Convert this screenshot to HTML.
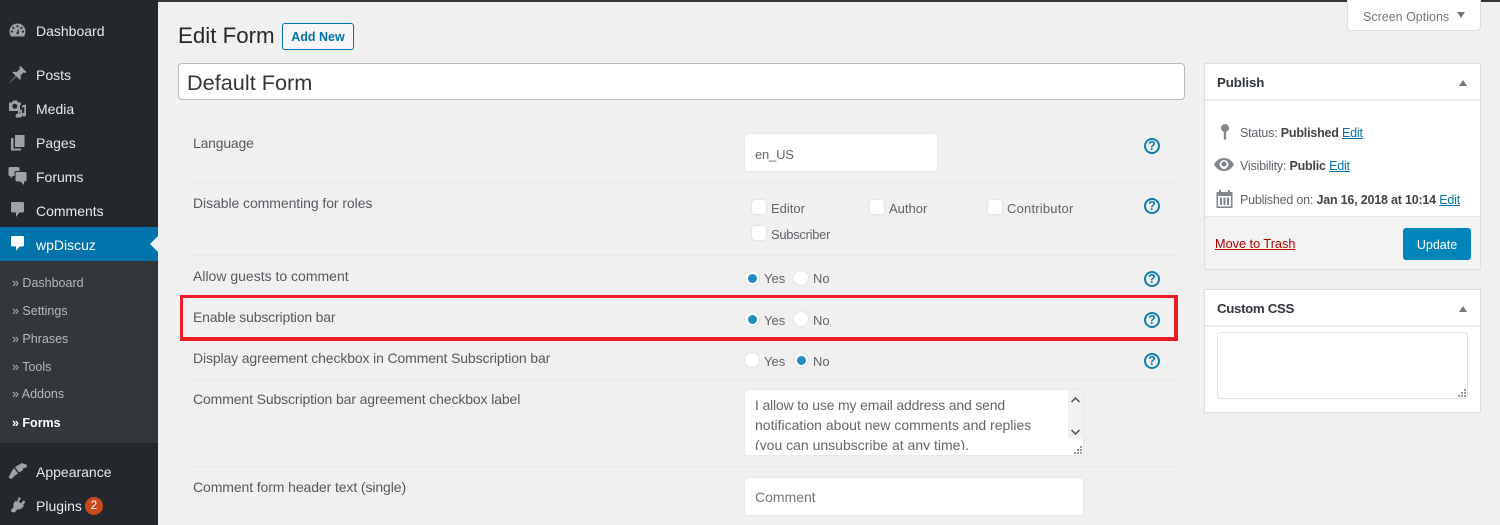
<!DOCTYPE html>
<html><head><meta charset="utf-8"><style>
html,body{margin:0;padding:0}
body{width:1500px;height:525px;overflow:hidden;background:#f0f0f0;position:relative;font-family:"Liberation Sans",sans-serif;font-size:13px;color:#555}
.a,.t{position:absolute}
.t{white-space:nowrap;line-height:18px}
.m{font-size:14px;left:36px;color:#e6eaec}
.s{color:#b4b9be;font-size:12.5px;left:12px}
.l{left:193px;color:#555a60;font-size:14px;letter-spacing:-.1px}
.v{color:#5f656b;font-size:13px}
.p{color:#5f656b;font-size:12.5px;letter-spacing:-.2px}
.sep{position:absolute;left:188px;width:988px;border-top:1px dotted #e2e2e2}
.inp{position:absolute;background:#fff;border-radius:3px;box-shadow:0 0 2px rgba(0,0,0,.1)}
.cb{position:absolute;width:14px;height:14px;background:#fff;border-radius:3px;box-shadow:0 0 2px rgba(0,0,0,.14)}
.r{position:absolute;width:14px;height:14px;background:#fff;border-radius:50%;box-shadow:0 0 2px rgba(0,0,0,.14)}
.r.on:after{content:"";position:absolute;left:2.500px;top:2.500px;width:9px;height:9px;border-radius:50%;background:#1e8cbe}
.q{position:absolute;left:1144px;width:12px;height:12px;border:2px solid #0f7fb0;border-radius:50%;color:#0f7fb0;font:bold 12.5px/12px "Liberation Sans",sans-serif;text-align:center}
.box{position:absolute;left:1204px;width:275px;background:#fff;border:1px solid #dcdfe2}
a{color:#0073aa;text-decoration:underline}
b{color:#444}
svg{position:absolute}
</style></head><body>
<div class="a" style="left:0;top:0;width:1500px;height:2px;background:#32373c"></div>
<div class="a" style="left:0;top:0;width:158px;height:525px;background:#23282d"></div>
<div class="a" style="left:0;top:227px;width:158px;height:34px;background:#0073aa"></div>
<div class="a" style="left:0;top:261px;width:158px;height:182px;background:#32373c"></div>
<div class="a" style="left:150px;top:236px;width:0;height:0;border:8px solid transparent;border-right-color:#f0f0f0;border-left:0"></div>

<svg style="left:9px;top:23px" width="17" height="14" viewBox="0 0 17 14"><path fill="#9ea3a8" fill-rule="evenodd" d="M8.500 .5C3.800 .5 .5 4.200 .5 8.500 .5 10.300 1 12 2 13.500H15C16 12 16.500 10.300 16.500 8.500 16.500 4.200 13.200 .5 8.500 .5ZM8.500 2.200A1.100 1.100 0 1 1 8.400 4.400 1.100 1.100 0 1 1 8.500 2.200ZM4.500 3.800A1.100 1.100 0 1 1 4.400 6 1.100 1.100 0 1 1 4.500 3.800ZM12.500 3.800A1.100 1.100 0 1 1 12.400 6 1.100 1.100 0 1 1 12.500 3.800ZM3 7.500A1.100 1.100 0 1 1 2.900 9.700 1.100 1.100 0 1 1 3 7.500ZM14 7.500A1.100 1.100 0 1 1 13.900 9.700 1.100 1.100 0 1 1 14 7.500ZM9.800 5.500 9.800 10.500A1.500 1.500 0 0 1 7.200 10.500Z"/></svg>
<div class="t m" style="top:22px">Dashboard</div>

<svg style="left:9px;top:66px" width="18" height="18" viewBox="0 0 18 18"><path fill="#9ea3a8" d="M11.500 0 17.500 6 16 7.200 14.800 6.300 11.500 9.800C12 11.200 11.800 12.700 11 14L7.300 10.300 .5 17.300 .2 17 6.800 9.800 3.300 6.500C4.600 5.700 6 5.600 7.600 6.100L11 2.800 10.300 1.500Z"/></svg>
<div class="t m" style="top:66px">Posts</div>

<svg style="left:8px;top:100px" width="19" height="18" viewBox="0 0 19 18"><path fill="#9ea3a8" fill-rule="evenodd" d="M1 2.500H4L5 .5H9L10 2.500H13V5H12V11H1ZM6.800 3.800A2.500 2.500 0 1 0 6.800 8.800 2.500 2.500 0 0 0 6.800 3.800Z"/><path fill="#9ea3a8" d="M14 5.500 18 4.500V14.500A2 2 0 1 1 16.300 12.600V7L14 7.500ZM10 10.500 14 9.500V15.500A2 2 0 1 1 12.400 13.600V11.500L11.500 11.800V15.800A2 2 0 1 1 10 13.900Z"/></svg>
<div class="t m" style="top:100px">Media</div>

<svg style="left:10px;top:134px" width="15" height="18" viewBox="0 0 15 18"><path fill="#9ea3a8" d="M5 1H14.500V13H5Z"/><path fill="#9ea3a8" d="M1 4H3.500V14.500H11V16.500H1Z"/></svg>
<div class="t m" style="top:134px">Pages</div>

<svg style="left:8px;top:167px" width="19" height="19" viewBox="0 0 19 19"><path fill="#9ea3a8" d="M2 0H10A1.500 1.500 0 0 1 11.500 1.500V4H8.500A2 2 0 0 0 6.500 6V9H5L2.500 11.500V9H2A1.500 1.500 0 0 1 .5 7.500V1.500A1.500 1.500 0 0 1 2 0Z"/><path fill="#9ea3a8" d="M9 5H17A1.500 1.500 0 0 1 18.500 6.500V13A1.500 1.500 0 0 1 17 14.500H16V18L12.500 14.500H9A1.500 1.500 0 0 1 7.500 13V6.500A1.500 1.500 0 0 1 9 5Z"/></svg>
<div class="t m" style="top:168px">Forums</div>

<svg style="left:10px;top:201px" width="15" height="17" viewBox="0 0 15 17"><path fill="#9ea3a8" d="M2.500 1H12.500A1.500 1.500 0 0 1 14 2.500V10A1.500 1.500 0 0 1 12.500 11.500H9.500L6 16V11.500H2.500A1.500 1.500 0 0 1 1 10V2.500A1.500 1.500 0 0 1 2.500 1Z"/></svg>
<div class="t m" style="top:202px">Comments</div>

<svg style="left:10px;top:235px" width="15" height="17" viewBox="0 0 15 17"><path fill="#fff" d="M2.500 1H12.500A1.500 1.500 0 0 1 14 2.500V10A1.500 1.500 0 0 1 12.500 11.500H9.500L6 16V11.500H2.500A1.500 1.500 0 0 1 1 10V2.500A1.500 1.500 0 0 1 2.500 1Z"/></svg>
<div class="t m" style="top:236px;color:#fff">wpDiscuz</div>

<div class="t s" style="top:274px">» Dashboard</div>
<div class="t s" style="top:302px">» Settings</div>
<div class="t s" style="top:330px">» Phrases</div>
<div class="t s" style="top:358px">» Tools</div>
<div class="t s" style="top:385px">» Addons</div>
<div class="t s" style="top:414px;color:#fff;font-weight:bold">» Forms</div>

<svg style="left:8px;top:462px" width="20" height="18" viewBox="0 0 20 18"><path fill="#9ea3a8" d="M7 5 14 1 19 3 18.500 5.500 15.500 6 14.500 8.500 11 10.500Z"/><path fill="#9ea3a8" d="M6 6 10 11.500 7 13.500 3.500 17 .5 15.500 3 10.500Z"/></svg>
<div class="t m" style="top:463px">Appearance</div>

<svg style="left:10px;top:496px" width="16" height="17" viewBox="0 0 16 17"><path fill="#9ea3a8" d="M9 1 11 2.500 8.700 5.500 11 7.300 13.500 4.300 15.500 6 13 9 14 10 13 10.800C11.500 13 9.500 13.800 7.500 13.300L4.500 16.500 1.500 16 1 14 3.800 11C3 9 3.300 7 4.800 5.700L5.700 4.700 6.700 5.700Z"/></svg>
<div class="t m" style="top:497px">Plugins</div>
<div class="a" style="left:85px;top:497px;width:18px;height:18px;border-radius:50%;background:#ca4a1f;color:#fff;font-size:11.500px;line-height:18px;text-align:center">2</div>

<div class="t" style="left:178px;top:21px;font-size:22.300px;line-height:30px;color:#23282d">Edit Form</div>
<div class="a" style="left:282px;top:23px;width:70px;height:25px;border:1px solid #0073aa;border-radius:3px;background:#f7f7f7;color:#0073aa;font-size:12.500px;font-weight:bold;line-height:27px;text-align:center">Add New</div>

<div class="a" style="left:1347px;top:0;width:132px;height:30px;background:#fff;border:1px solid #ddd;border-top:0;border-radius:0 0 4px 4px"></div>
<div class="t" style="left:1363px;top:8px;color:#72777c;font-size:12.500px">Screen Options</div>
<div class="a" style="left:1457px;top:12px;border:4.500px solid transparent;border-top:6px solid #72777c;border-bottom:0"></div>

<div class="a" style="left:178px;top:63px;width:1005px;height:35px;background:#fff;border:1px solid #b4b9be;border-radius:4px"></div>
<div class="t" style="left:187px;top:69px;font-size:21.700px;line-height:28px;color:#32373c">Default Form</div>

<div class="t l" style="top:134px;letter-spacing:-.2px">Language</div>
<div class="inp" style="left:745px;top:134px;width:192px;height:37px"></div>
<div class="t v" style="left:755px;top:146px;color:#666;font-size:13px;letter-spacing:-.2px">en_US</div>
<div class="q" style="top:138px">?</div>
<div class="sep" style="top:182px"></div>

<div class="t l" style="top:194px;letter-spacing:-.07px">Disable commenting for roles</div>
<div class="cb" style="left:752px;top:200px"></div><div class="t v" style="left:771px;top:200px">Editor</div>
<div class="cb" style="left:870px;top:200px"></div><div class="t v" style="left:889px;top:200px">Author</div>
<div class="cb" style="left:988px;top:200px"></div><div class="t v" style="left:1007px;top:200px;letter-spacing:.2px">Contributor</div>
<div class="cb" style="left:752px;top:226px"></div><div class="t v" style="left:771px;top:226px;letter-spacing:-.3px">Subscriber</div>
<div class="q" style="top:198px">?</div>
<div class="sep" style="top:255px"></div>

<div class="t l" style="top:267px;letter-spacing:0">Allow guests to comment</div>
<div class="r on" style="left:745px;top:271px"></div><div class="t v" style="left:764px;top:270px">Yes</div>
<div class="r" style="left:794px;top:271px"></div><div class="t v" style="left:813px;top:270px">No</div>
<div class="q" style="top:271px">?</div>

<div class="t l" style="top:308px;letter-spacing:-.17px">Enable subscription bar</div>
<div class="r on" style="left:745px;top:312px"></div><div class="t v" style="left:764px;top:312px">Yes</div>
<div class="r" style="left:794px;top:312px"></div><div class="t v" style="left:813px;top:312px">No</div>
<div class="q" style="top:312px">?</div>

<div class="t l" style="top:349px;letter-spacing:-.13px">Display agreement checkbox in Comment Subscription bar</div>
<div class="r" style="left:745px;top:353px"></div><div class="t v" style="left:764px;top:353px">Yes</div>
<div class="r on" style="left:794px;top:353px"></div><div class="t v" style="left:813px;top:353px">No</div>
<div class="q" style="top:353px">?</div>
<div class="sep" style="top:379px"></div>

<div class="t l" style="top:390px;letter-spacing:-.12px">Comment Subscription bar agreement checkbox label</div>
<div class="inp" style="left:745px;top:390px;width:338px;height:65px;overflow:hidden">
<div style="position:absolute;left:10px;top:5px;width:310px;height:55px;overflow:hidden;font-size:14px;line-height:20px;color:#666;white-space:nowrap"><span style="letter-spacing:-.17px">I allow to use my email address and send</span><br>notification about new comments and replies<br>(you can unsubscribe at any time).</div>
<div style="position:absolute;right:0;top:0;width:15px;height:49px;background:#f1f1f1"></div>
<svg style="left:323px;top:4px" width="15" height="44" viewBox="0 0 15 44"><path fill="none" stroke="#505050" stroke-width="1.500" d="M3.500 8 7.500 4 11.500 8M3.500 36 7.500 40 11.500 36"/></svg>
<svg style="left:328px;top:55px" width="10" height="10" viewBox="0 0 10 10"><path fill="#999" d="M7 1h2v2H7zM4 4h2v2H4zM7 4h2v2H7zM1 7h2v2H1zM4 7h2v2H4zM7 7h2v2H7z"/></svg>
</div>
<div class="sep" style="top:466px"></div>

<div class="t l" style="top:478px">Comment form header text (single)</div>
<div class="inp" style="left:745px;top:478px;width:338px;height:37px"></div>
<div class="t v" style="left:755px;top:488px;font-size:14px;color:#72777c">Comment</div>

<div class="a" style="left:180px;top:295px;width:991px;height:39px;border:solid #ed1c24;border-width:3px 4px 4px 3px"></div>

<div class="box" style="top:63px;height:205px">
<div class="a" style="left:0;top:35px;width:275px;height:2px;background:#ececec"></div>
<div class="a" style="left:0;top:152px;width:275px;height:52px;background:#f3f3f3;border-top:1px solid #e4e4e4"></div>
</div>
<div class="t" style="left:1217px;top:74px;font-size:13.300px;font-weight:bold;color:#32373c;letter-spacing:-.1px">Publish</div>
<div class="a" style="left:1459px;top:80px;border:4px solid transparent;border-bottom:6px solid #72777c;border-top:0"></div>
<svg style="left:1221px;top:124px" width="8" height="16" viewBox="0 0 8 16"><path fill="#82878c" d="M4 0A4 4 0 0 1 5.200 7.800V15L3.500 16 2.800 15V7.800A4 4 0 0 1 4 0Z"/></svg>
<div class="t p" style="left:1240px;top:124px">Status: <b>Published</b> <a>Edit</a></div>
<svg style="left:1214px;top:157px" width="20" height="15" viewBox="0 0 20 15"><path fill="#82878c" fill-rule="evenodd" d="M0 7.500C2.500 3 6 1 10 1S17.500 3 20 7.500C17.500 12 14 14 10 14S2.500 12 0 7.500ZM10 3A4.500 4.500 0 1 0 10 12 4.500 4.500 0 0 0 10 3Z"/><circle cx="10" cy="7" r="2.500" fill="#82878c"/></svg>
<div class="t p" style="left:1240px;top:157px">Visibility: <b>Public</b> <a>Edit</a></div>
<svg style="left:1216px;top:190px" width="17" height="18" viewBox="0 0 17 18"><path fill="#82878c" fill-rule="evenodd" d="M3 0H5V2H12V0H14V2H16.500V18H.5V2H3ZM2 6V16.500H15V6Z"/><path fill="#82878c" d="M4 7.500H6V15H4ZM7.500 7.500H9.500V15H7.500ZM11 7.500H13V15H11Z"/></svg>
<div class="t p" style="left:1240px;top:191px">Published on: <b>Jan 16, 2018 at 10:14</b> <a>Edit</a></div>
<div class="t" style="left:1215px;top:235px;color:#a00;font-size:12.700px"><a style="color:#a00">Move to Trash</a></div>
<div class="a" style="left:1403px;top:228px;width:68px;height:32px;background:#0085ba;border-radius:3px;color:#fff;line-height:35px;text-align:center;font-size:12.500px">Update</div>

<div class="box" style="top:289px;height:122px">
<div class="a" style="left:0;top:35px;width:275px;height:2px;background:#ececec"></div>
<div class="a" style="left:12px;top:42px;width:249px;height:65px;border:1px solid #e3e3e3;border-radius:4px"></div>
</div>
<div class="t" style="left:1217px;top:300px;font-size:13.300px;font-weight:bold;color:#32373c;letter-spacing:-.35px">Custom CSS</div>
<div class="a" style="left:1459px;top:306px;border:4px solid transparent;border-bottom:6px solid #72777c;border-top:0"></div>
<svg style="left:1456px;top:388px" width="10" height="10" viewBox="0 0 10 10"><path fill="#999" d="M8 1h2v2H8zM5 4h2v2H5zM8 4h2v2H8zM2 7h2v2H2zM5 7h2v2H5zM8 7h2v2H8z"/></svg>
</body></html>
